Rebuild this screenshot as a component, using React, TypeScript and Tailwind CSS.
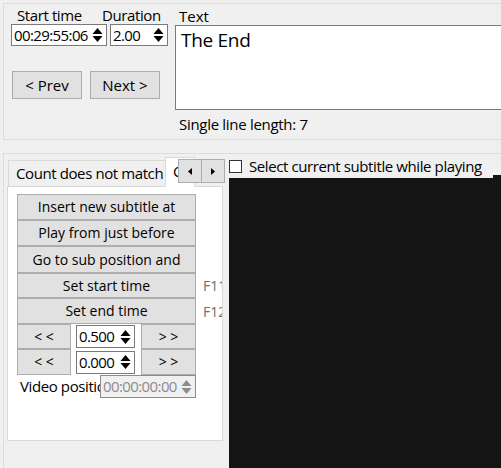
import React from "react";

const font = { fontFamily: '"Open Sans", "Noto Sans", sans-serif' };

function SpinArrows({ disabled }: { disabled?: boolean }) {
  const c = disabled ? "#8c8c8c" : "#000";
  return (
    <svg width="11" height="16" viewBox="0 0 11 16" className="shrink-0">
      <path d="M5.5 1 L10.5 7 L0.5 7 Z" fill={c} />
      <path d="M0.5 9 L10.5 9 L5.5 15 Z" fill={c} />
    </svg>
  );
}

function SpinBox({ value, className, disabled }: { value: string; className: string; disabled?: boolean }) {
  return (
    <div
      className={`flex shrink-0 items-center justify-between border ${
        disabled ? "border-[#8c8c8c] bg-[#f0f0f0] text-[#8c8c8c]" : "border-[#7a7a7a] bg-white text-black"
      } pl-[2px] pr-[3px] text-[15px] leading-none ${className}`}
    >
      <span className="tracking-[-0.6px]">{value}</span>
      <SpinArrows disabled={disabled} />
    </div>
  );
}

function Btn({ children, className }: { children: React.ReactNode; className: string }) {
  return (
    <div
      className={`flex shrink-0 items-center justify-center border border-[#adadad] bg-[#e1e1e1] text-[14px] leading-none text-black ${className}`}
    >
      {children}
    </div>
  );
}

export default function App() {
  return (
    <div className="h-[468px] w-[501px] overflow-hidden bg-[#f0f0f0] pt-[3px]" style={font}>
      {/* edit group */}
      <div className="ml-[3px] flex h-[137px] border border-r-0 border-[#dcdcdc]">
        <div className="flex w-[171px] shrink-0 flex-col">
          <div className="flex h-[20px] items-end text-[15px] leading-[18px] tracking-[-0.4px] text-black">
            <span className="ml-[13px] w-[85px]">Start time</span>
            <span>Duration</span>
          </div>
          <div className="flex">
            <SpinBox value="00:29:55:06" className="ml-[7px] h-[22px] w-[96px]" />
            <SpinBox value="2.00" className="ml-[3px] h-[22px] w-[58px]" />
          </div>
          <div className="mt-[25px] flex gap-[8px] pl-[8px]">
            <Btn className="h-[28px] w-[70px] text-[15px]">&lt; Prev</Btn>
            <Btn className="h-[28px] w-[70px] text-[15px]">Next &gt;</Btn>
          </div>
        </div>
        <div className="flex flex-1 flex-col">
          <div className="flex h-[21px] items-end pl-[4px] text-[15px] leading-[18px] text-black">Text</div>
          <div className="h-[85px] w-[340px] border border-[#7a7a7a] bg-white pl-[5px] pt-[2px] text-[19px] leading-[25px] tracking-[-0.3px] text-black">
            The End
          </div>
          <div className="mt-[5px] pl-[4px] text-[15px] leading-[18px] tracking-[-0.3px] text-black">
            Single line length: 7
          </div>
        </div>
      </div>

      {/* lower area */}
      <div className="ml-[3px] mt-[13px] flex h-[320px] border-l border-t border-[#dcdcdc]">
        {/* tab control */}
        <div className="relative ml-[3px] w-[216px] shrink-0">
          <div className="relative h-[32px]">
            <div className="absolute left-[1px] top-[6px] flex h-[26px] w-[158px] items-center border border-b-0 border-[#d9d9d9] bg-[#f0f0f0] pl-[7px] text-[15px] leading-none tracking-[-0.4px] text-black">
              Count does not match
            </div>
            <div className="absolute left-[158px] top-[3px] z-10 flex h-[30px] w-[30px] items-start overflow-hidden border border-b-0 border-[#d9d9d9] bg-white pl-[7px] pt-[6px] text-[15px] leading-none text-black">
              Cr
            </div>
            <div className="absolute left-[171px] top-[5px] z-20 flex h-[24px] w-[47px]">
              <div className="flex h-full w-[24px] items-center justify-center border border-[#adadad] bg-[#e1e1e1]">
                <svg width="4" height="7" viewBox="0 0 4 7">
                  <path d="M4 0 L0 3.5 L4 7 Z" fill="#000" />
                </svg>
              </div>
              <div className="-ml-px flex h-full w-[24px] items-center justify-center border border-[#adadad] bg-[#e1e1e1]">
                <svg width="4" height="7" viewBox="0 0 4 7">
                  <path d="M0 0 L4 3.5 L0 7 Z" fill="#000" />
                </svg>
              </div>
            </div>
          </div>
          <div className="h-[255px] overflow-hidden border border-[#d9d9d9] bg-white pl-[9px] pt-[7px]">
            <div className="flex flex-col">
              <Btn className="h-[26px] w-[179px]">Insert new subtitle at</Btn>
              <Btn className="h-[26px] w-[179px]">Play from just before</Btn>
              <Btn className="h-[27px] w-[179px]">Go to sub position and</Btn>
              <div className="flex items-center">
                <Btn className="h-[25px] w-[179px]">Set start time</Btn>
                <span className="ml-[7px] whitespace-nowrap text-[14px] text-[#6d6d6d]">F11</span>
              </div>
              <div className="flex items-center">
                <Btn className="h-[26px] w-[179px]">Set end time</Btn>
                <span className="ml-[7px] whitespace-nowrap text-[14px] text-[#6d6d6d]">F12</span>
              </div>
              <div className="flex h-[25px] items-center">
                <Btn className="h-[25px] w-[54px] text-[12px] text-[#444]">&lt; &lt;</Btn>
                <SpinBox value="0.500" className="ml-[5px] h-[23px] w-[59px]" />
                <Btn className="ml-[6px] h-[25px] w-[55px] text-[12px] text-[#444]">&gt; &gt;</Btn>
              </div>
              <div className="flex h-[26px] items-center">
                <Btn className="h-[26px] w-[54px] text-[12px] text-[#444]">&lt; &lt;</Btn>
                <SpinBox value="0.000" className="ml-[5px] h-[23px] w-[59px]" />
                <Btn className="ml-[6px] h-[26px] w-[55px] text-[12px] text-[#444]">&gt; &gt;</Btn>
              </div>
              <div className="flex h-[23px] items-center">
                <span className="w-[83px] shrink-0 overflow-hidden whitespace-nowrap pl-[3px] text-[15px] tracking-[-0.4px] text-black">
                  Video position
                </span>
                <SpinBox value="00:00:00:00" disabled className="h-[23px] w-[96px]" />
              </div>
            </div>
          </div>
        </div>

        {/* video side */}
        <div className="ml-[6px] flex flex-1 flex-col">
          <div className="flex h-[24px] items-end">
            <div className="mb-[5px] mt-auto flex items-center self-start pt-[6px]">
              <div className="h-[13px] w-[13px] border border-[#333] bg-white" />
              <span className="ml-[7px] text-[15px] leading-[13px] tracking-[-0.4px] text-black">
                Select current subtitle while playing
              </span>
            </div>
            <div className="ml-auto h-[3px] w-[8px] bg-[#141414]" />
          </div>
          <div className="flex-1 bg-[#141414]" />
        </div>
      </div>
    </div>
  );
}
